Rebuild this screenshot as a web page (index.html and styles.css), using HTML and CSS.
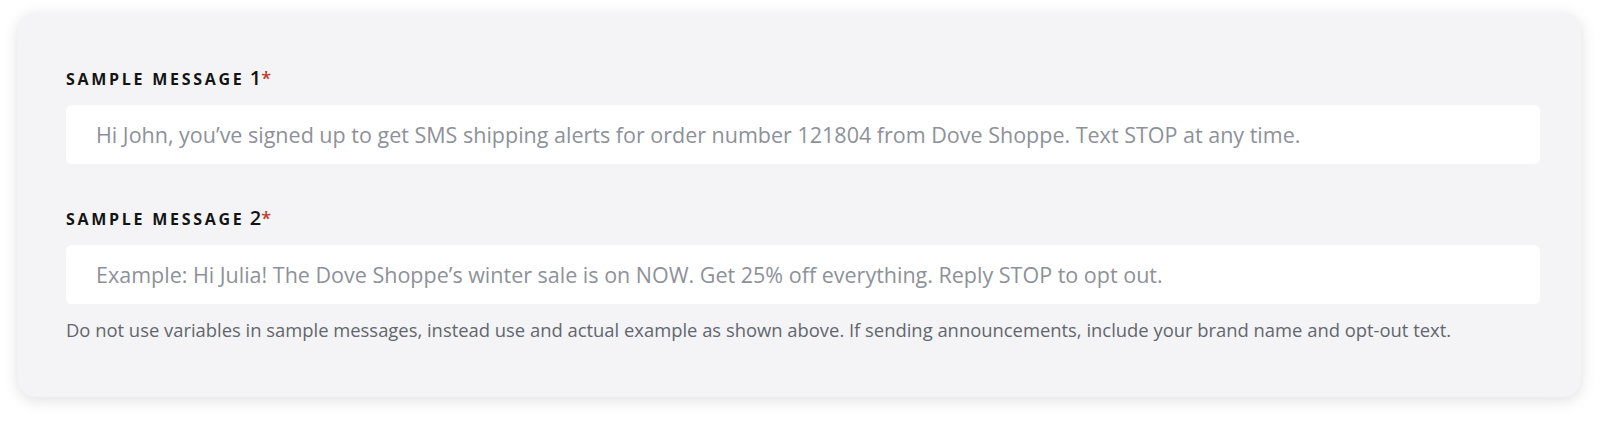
FILE: index.html
```html
<!DOCTYPE html>
<html lang="en">
<head>
    <meta charset="UTF-8">
    <meta name="viewport" content="width=device-width, initial-scale=1.0">
    <title>Sample Messages</title>
    <link rel="stylesheet" href="styles.css">
</head>
<body>
    <div class="card">
        <div class="field">
            <label class="field-label" for="sample1"><span class="label-text">Sample message</span> 1<span class="required">*</span></label>
            <input class="field-input" id="sample1" type="text" placeholder="Hi John, you’ve signed up to get SMS shipping alerts for order number 121804 from Dove Shoppe. Text STOP at any time.">
        </div>
        <div class="field">
            <label class="field-label" for="sample2"><span class="label-text">Sample message</span> 2<span class="required">*</span></label>
            <input class="field-input" id="sample2" type="text" placeholder="Example: Hi Julia! The Dove Shoppe’s winter sale is on NOW. Get 25% off everything. Reply STOP to opt out.">
            <p class="field-help">Do not use variables in sample messages, instead use and actual example as shown above. If sending announcements, include your brand name and opt-out text.</p>
        </div>
    </div>
</body>
</html>
```

FILE: styles.css
```css
body {
    margin: 0;
    background: #ffffff;
    font-family: "Open Sans", sans-serif;
}

.card {
    margin: 13px 19px 25px 18px;
    height: 384px;
    box-sizing: border-box;
    padding: 52px 41px 0 48px;
    background-color: #f4f4f6;
    border-radius: 18px;
    box-shadow: 0 3px 16px rgba(0, 0, 0, 0.13);
}

.field {
    margin-bottom: 41px;
}

.field-label {
    display: block;
    font-size: 20px;
    line-height: 26px;
    font-weight: 600;
    color: #141414;
    margin-bottom: 13px;
}

.label-text {
    font-size: 16px;
    font-weight: 700;
    text-transform: uppercase;
    letter-spacing: 0.17em;
}

.required {
    color: #c0392b;
    font-size: 18px;
}

.field-input {
    display: block;
    width: 100%;
    height: 59px;
    box-sizing: border-box;
    padding: 0 30px;
    border: none;
    border-radius: 6px;
    background-color: #ffffff;
    font-family: "Open Sans", sans-serif;
    font-size: 21.5px;
    color: #333;
    outline: none;
}

.field-input::placeholder {
    color: #8d9199;
}

.field-help {
    margin: 14px 0 0;
    font-size: 18.4px;
    line-height: 24px;
    color: #62666d;
}
```
